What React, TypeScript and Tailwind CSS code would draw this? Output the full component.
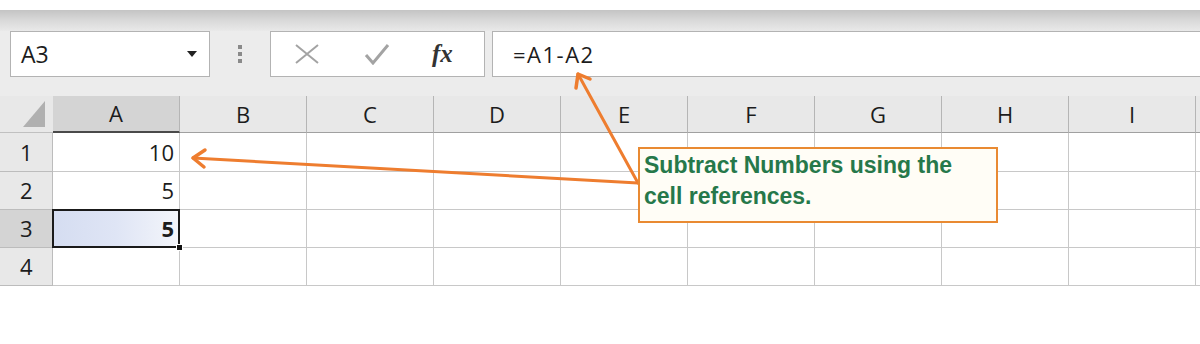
import React from "react";

const COLS = ["A", "B", "C", "D", "E", "F", "G", "H", "I"];

const ROWS = [
  { n: 1, h: "h-[39px]", a: "10" },
  { n: 2, h: "h-[38px]", a: "5" },
  { n: 3, h: "h-[38px]", a: "5" },
  { n: 4, h: "h-[38px]", a: "" },
];

function Arrows() {
  return (
    <svg
      className="absolute left-0 top-0 pointer-events-none"
      width={1200}
      height={344}
      viewBox="0 0 1200 344"
    >
      <g stroke="#ee7d2f" strokeWidth={3} fill="none" strokeLinecap="round" strokeLinejoin="round">
        <line x1={638} y1={183} x2={193} y2={158} />
        <polyline points="204,167 193,158 205,150" strokeWidth={3.5} />
        <line x1={638} y1={183} x2={578} y2={74} />
        <polyline points="576,88 578,74 590,79" strokeWidth={3.5} />
      </g>
    </svg>
  );
}

export default function App() {
  return (
    <div className="relative w-[1200px] h-[344px] overflow-hidden bg-white font-['Open_Sans',sans-serif] text-[#1c1c1c]">
      {/* ribbon edge */}
      <div className="h-[10px] bg-white" />
      <div className="h-[21px] bg-gradient-to-b from-[#c4c4c4] via-[#d9d9d9] to-[#e9e9e9]" />

      {/* formula bar */}
      <div className="bg-[#ececec] pb-[19px]">
        <div className="flex h-[46px] items-stretch">
          <div className="ml-[10px] flex w-[200px] items-center justify-between border border-[#b3b3b3] bg-white pl-[10px] pr-[12px]">
            <span className="text-[23px]">A3</span>
            <span className="h-0 w-0 border-x-[5px] border-t-[6px] border-x-transparent border-t-[#222]" />
          </div>
          <div className="flex w-[60px] flex-col items-center justify-center gap-[3px]">
            <span className="h-[4px] w-[4px] bg-[#8a8a8a]" />
            <span className="h-[4px] w-[4px] bg-[#8a8a8a]" />
            <span className="h-[4px] w-[4px] bg-[#8a8a8a]" />
          </div>
          <div className="flex w-[215px] items-center border border-[#b3b3b3] bg-white">
            <svg width={26} height={20} viewBox="0 0 26 20" className="ml-[23px]">
              <path d="M2 1 L24 19 M24 1 L2 19" stroke="#a3a3a3" strokeWidth={2} />
            </svg>
            <svg width={26} height={22} viewBox="0 0 26 22" className="ml-[44px]">
              <path d="M2 12 L9 20 L24 2" stroke="#a3a3a3" strokeWidth={3} fill="none" />
            </svg>
            <span className="ml-[42px] font-['Liberation_Serif',serif] text-[25px] font-bold italic text-[#333]">
              fx
            </span>
          </div>
          <div className="ml-[7px] flex flex-1 items-center border border-r-0 border-[#b3b3b3] bg-white pl-[20px]">
            <span className="text-[22px] tracking-[1.5px]">=A1-A2</span>
          </div>
        </div>
      </div>

      {/* grid */}
      <div className="flex h-[37px] bg-[#e8e8e8]">
        <div className="relative flex w-[53px] items-end justify-end border-b border-[#c0c0c0] pb-[5px] pr-[8px]">
          <span className="h-0 w-0 border-b-[26px] border-l-[22px] border-l-transparent border-b-[#b0b0b0]" />
        </div>
        {COLS.map((c) => (
          <div
            key={c}
            className={
              c === "A"
                ? "flex w-[127px] items-center justify-center border-b-2 border-r border-[#4a4a4a] border-r-[#b5b5b5] bg-[#d4d4d4] text-[22px]"
                : "flex w-[127px] items-center justify-center border-b border-r border-[#b5b5b5] border-b-[#a0a0a0] text-[22px]"
            }
          >
            {c}
          </div>
        ))}
        <div className="flex-1 border-b border-[#a0a0a0]" />
      </div>

      {ROWS.map((r) => (
        <div key={r.n} className={`flex ${r.h}`}>
          <div
            className={
              r.n === 3
                ? "flex w-[53px] items-center border-b border-r border-[#bcbcbc] bg-[#d4d4d4] pl-[20px] text-[22px]"
                : "flex w-[53px] items-center border-b border-r border-[#bcbcbc] bg-[#e8e8e8] pl-[20px] text-[22px]"
            }
          >
            {r.n}
          </div>
          {r.n === 3 ? (
            <div className="relative -ml-px -mt-px flex w-[128px] items-center justify-end border-2 border-[#1a1a1a] bg-gradient-to-r from-[#d5ddf1] via-[#dfe5f5] to-[#f3f5fa] pr-[4px] text-[22px] font-bold">
              5
              <span className="absolute -bottom-[5px] -right-[5px] h-[7px] w-[7px] border border-white bg-[#111]" />
            </div>
          ) : (
            <div className="flex w-[127px] items-center justify-end border-b border-r border-[#c8c8c8] pr-[5px] text-[22px]">
              {r.a}
            </div>
          )}
          {COLS.slice(1).map((c) => (
            <div key={c} className="w-[127px] border-b border-r border-[#c8c8c8]" />
          ))}
          <div className="flex-1 border-b border-[#c8c8c8]" />
        </div>
      ))}

      <Arrows />

      {/* callout */}
      <div className="absolute left-[638px] top-[147px] h-[76px] w-[360px] border-2 border-[#e98a32] bg-[#fffdf6] pl-[4px] pt-[1px] font-['Liberation_Sans',Arial,sans-serif] text-[23px] font-bold leading-[31px] text-[#26784a]">
        Subtract Numbers using the
        <br />
        cell references.
      </div>
    </div>
  );
}
